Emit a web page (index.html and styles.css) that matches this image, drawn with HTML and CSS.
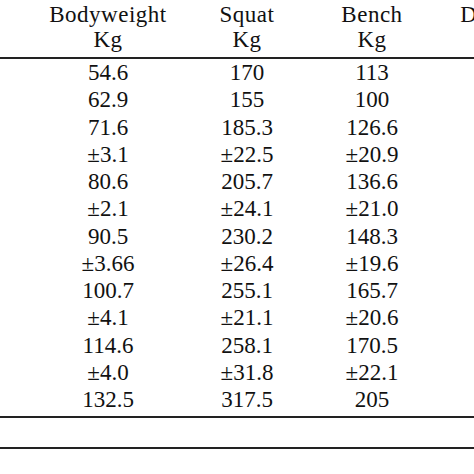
FILE: index.html
```html
<!DOCTYPE html>
<html lang="en">
<head>
<meta charset="utf-8">
<title>Strength table</title>
<link rel="stylesheet" href="styles.css">
</head>
<body>
<div class="frame">
<table class="data">
<colgroup>
<col class="c-lead"><col class="c-bw"><col class="c-sq"><col class="c-bn"><col class="c-dl">
</colgroup>
<thead>
<tr class="head">
<th></th>
<th>Bodyweight<br>Kg</th>
<th>Squat<br>Kg</th>
<th>Bench<br>Kg</th>
<th>Deadlift<br>Kg</th>
</tr>
</thead>
<tbody>
<tr class="first"><td></td><td>54.6</td><td>170</td><td>113</td><td></td></tr>
<tr><td></td><td>62.9</td><td>155</td><td>100</td><td></td></tr>
<tr><td></td><td>71.6</td><td>185.3</td><td>126.6</td><td></td></tr>
<tr><td></td><td>±3.1</td><td>±22.5</td><td>±20.9</td><td></td></tr>
<tr><td></td><td>80.6</td><td>205.7</td><td>136.6</td><td></td></tr>
<tr><td></td><td>±2.1</td><td>±24.1</td><td>±21.0</td><td></td></tr>
<tr><td></td><td>90.5</td><td>230.2</td><td>148.3</td><td></td></tr>
<tr><td></td><td>±3.66</td><td>±26.4</td><td>±19.6</td><td></td></tr>
<tr><td></td><td>100.7</td><td>255.1</td><td>165.7</td><td></td></tr>
<tr><td></td><td>±4.1</td><td>±21.1</td><td>±20.6</td><td></td></tr>
<tr><td></td><td>114.6</td><td>258.1</td><td>170.5</td><td></td></tr>
<tr><td></td><td>±4.0</td><td>±31.8</td><td>±22.1</td><td></td></tr>
<tr class="last"><td></td><td>132.5</td><td>317.5</td><td>205</td><td></td></tr>
<tr class="blank"><td></td><td></td><td></td><td></td><td></td></tr>
</tbody>
</table>
</div>
</body>
</html>
```

FILE: styles.css
```css
html, body {
  margin: 0;
  padding: 0;
  background: #ffffff;
}

.frame {
  width: 474px;
  height: 474px;
  overflow: hidden;
}

.data {
  border-collapse: collapse;
  border-spacing: 0;
  table-layout: fixed;
  width: 572px;
  font-family: "Liberation Serif", "Times New Roman", serif;
  font-size: 23px;
  color: #111111;
}

.c-lead { width: 38px; }
.c-bw { width: 140px; }
.c-sq { width: 138px; }
.c-bn { width: 112px; }
.c-dl { width: 144px; }

.data th,
.data td {
  padding: 0;
  text-align: center;
  white-space: nowrap;
}

.data th {
  font-weight: normal;
  line-height: 25px;
  letter-spacing: 0.5px;
  padding-top: 2px;
  padding-bottom: 5px;
  vertical-align: top;
}

.head {
  border-bottom: 2px solid #222222;
}

.data td {
  line-height: 27.25px;
}

.last td {
  padding-bottom: 3px;
}

.last {
  border-bottom: 2px solid #222222;
}

.blank td {
  height: 29px;
  line-height: 29px;
}

.blank {
  border-bottom: 2px solid #222222;
}
```
